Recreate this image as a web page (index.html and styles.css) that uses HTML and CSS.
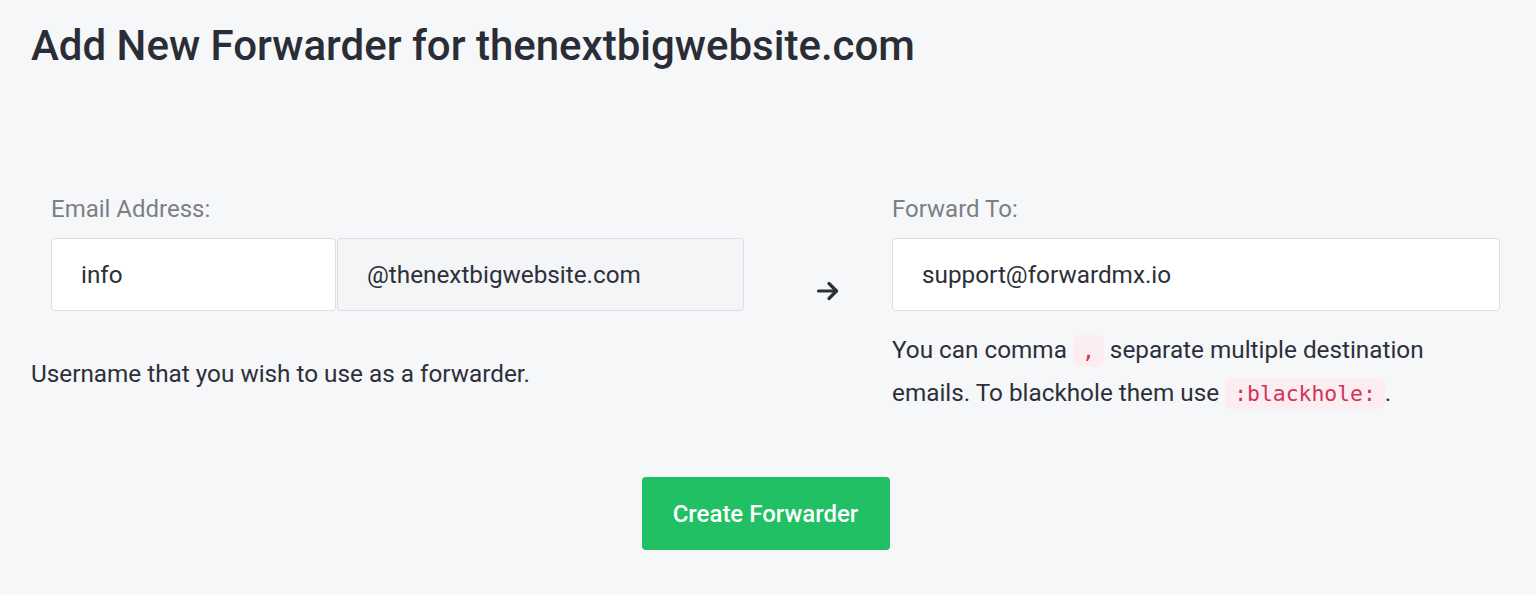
FILE: index.html
```html
<!DOCTYPE html>
<html lang="en">
<head>
<meta charset="utf-8">
<title>Add New Forwarder</title>
<link rel="stylesheet" href="styles.css">
</head>
<body>
<main class="page">
  <h1 class="title">Add New Forwarder for thenextbigwebsite.com</h1>
  <div class="form-row">
    <div class="col col-left">
      <label class="label">Email Address:</label>
      <div class="input-group">
        <div class="input input-user">info</div>
        <div class="input input-domain">@thenextbigwebsite.com</div>
      </div>
      <p class="help help-left">Username that you wish to use as a forwarder.</p>
    </div>
    <div class="arrow">
      <svg width="24" height="24" viewBox="0 0 24 24" fill="none" stroke="#2d3039" stroke-width="3.2" stroke-linecap="round" stroke-linejoin="round"><path d="M2.5 12H20.5"/><path d="M13 4.5l7.5 7.5-7.5 7.5"/></svg>
    </div>
    <div class="col col-right">
      <label class="label">Forward To:</label>
      <div class="input input-dest">support@forwardmx.io</div>
      <p class="help help-right">You can comma <code class="code">,</code> separate multiple destination emails. To blackhole them use <code class="code">:blackhole:</code>.</p>
    </div>
  </div>
  <div class="actions">
    <button class="btn" type="button">Create Forwarder</button>
  </div>
</main>
</body>
</html>
```
FILE: styles.css
```css
html, body {
  margin: 0;
  padding: 0;
  background: #f6f7f9;
}
body {
  font-family: Roboto, "Liberation Sans", sans-serif;
  color: #2d3039;
  font-size: 24px;
}
.page {
  padding: 20px 36px 0 31px;
}
.title {
  margin: 0;
  font-size: 42px;
  line-height: 52px;
  font-weight: 500;
  color: #2a2d35;
}
.form-row {
  display: flex;
  margin-top: 123px;
}
.col-left {
  width: 713px;
}
.col-right {
  width: 608px;
}
.label {
  display: block;
  font-size: 24px;
  line-height: 28px;
  color: #7c7f86;
  margin-bottom: 15px;
}
.col-left .label {
  margin-left: 20px;
}
.input-group {
  display: flex;
  gap: 1px;
  margin-left: 20px;
}
.input {
  box-sizing: border-box;
  height: 73px;
  border: 1px solid #dcdee2;
  border-radius: 4px;
  background: #fff;
  display: flex;
  align-items: center;
  padding-left: 29px;
  font-size: 24.3px;
  color: #2d3039;
}
.input-user {
  width: 285px;
}
.input-domain {
  width: 407px;
  background: #f4f5f7;
}
.input-dest {
  width: 608px;
}
.arrow {
  width: 24px;
  height: 24px;
  margin: 84px 52px 0 72px;
}
.arrow svg {
  display: block;
}
.help {
  margin: 0;
  font-size: 24.3px;
}
.help-left {
  line-height: 28px;
  margin-top: 49px;
}
.help-right {
  line-height: 42px;
  margin-top: 18px;
  width: 560px;
}
.code {
  font-family: "DejaVu Sans Mono", "Liberation Mono", monospace;
  font-size: 21.4px;
  color: #cf3359;
  background: #fcedf0;
  border-radius: 6px;
  padding: 3px 9px;
}
.actions {
  display: flex;
  justify-content: center;
  margin-top: 62px;
}
.btn {
  width: 248px;
  height: 73px;
  border: none;
  border-radius: 4px;
  background: #21c064;
  color: #fff;
  font-family: Roboto, "Liberation Sans", sans-serif;
  font-size: 24px;
  font-weight: 500;
  padding: 0;
}
```
